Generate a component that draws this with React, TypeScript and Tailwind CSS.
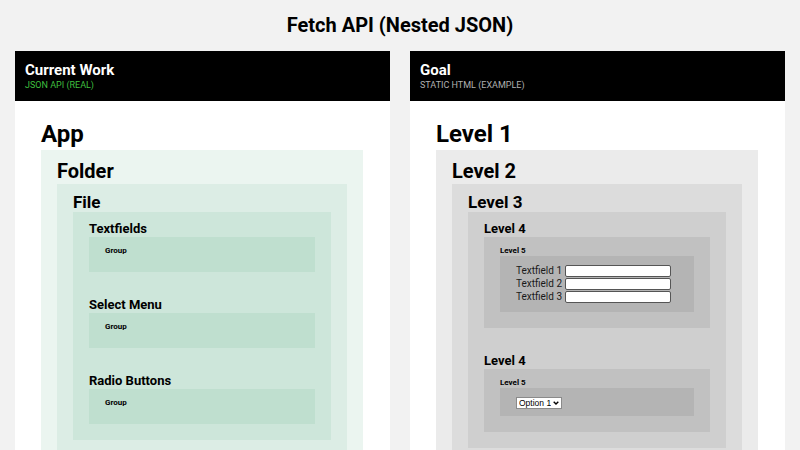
import React from "react";

const font = { fontFamily: "Roboto, 'Noto Sans', Arial, sans-serif" };

function GroupBox({ label, bg, children }: { label: string; bg: string; children?: React.ReactNode }) {
  return (
    <div className={`${bg} px-4 pt-2 pb-4`}>
      <div className="text-[8px] leading-[11px] font-bold text-black">{label}</div>
      {children}
    </div>
  );
}

function H4({ children, first }: { children: React.ReactNode; first?: boolean }) {
  return (
    <div className={`text-[13px] leading-[17px] font-bold text-black ${first ? "" : "mt-6"}`}>{children}</div>
  );
}

function Row({ n }: { n: number }) {
  return (
    <div className="flex items-center h-[13px]">
      <span className="text-[10px] leading-[13px] text-[#1a1a1a] mr-[3px]">Textfield {n}</span>
      <input className="w-[106px] h-[12px] bg-white border border-[#555] rounded-[2px] outline-none" />
    </div>
  );
}

export default function App() {
  return (
    <div className="w-[800px] h-[450px] overflow-hidden bg-[#f2f2f2]" style={font}>
      <div className="h-[51px] flex items-center justify-center pb-[2px]">
        <h1 className="text-[20px] font-bold text-black leading-none">Fetch API (Nested JSON)</h1>
      </div>
      <div className="flex gap-5 px-[15px]">
        {/* Left panel */}
        <div className="flex-1 bg-white h-[400px]">
          <div className="bg-black px-[10px] pt-[10px] pb-[10px]">
            <div className="text-[15px] leading-[18px] font-bold text-white">Current Work</div>
            <div className="text-[9px] leading-[12px] text-[#3fbf3f] uppercase">JSON API (REAL)</div>
          </div>
          <div className="pl-[26px] pr-[27px] pt-[18px]">
            <div className="text-[24px] leading-[31px] font-bold text-black">App</div>
            <div className="bg-[#ebf5f0] px-4 pt-2 pb-4">
              <div className="text-[20px] leading-[26px] font-bold text-black">Folder</div>
              <div className="bg-[#dcede5] px-4 pt-2 pb-4">
                <div className="text-[17px] leading-[20px] font-bold text-black">File</div>
                <div className="bg-[#cde6da] px-4 pt-2 pb-4">
                  <H4 first>Textfields</H4>
                  <GroupBox label="Group" bg="bg-[#bfdfcf]" />
                  <H4>Select Menu</H4>
                  <GroupBox label="Group" bg="bg-[#bfdfcf]" />
                  <H4>Radio Buttons</H4>
                  <GroupBox label="Group" bg="bg-[#bfdfcf]" />
                </div>
              </div>
            </div>
          </div>
        </div>
        {/* Right panel */}
        <div className="flex-1 bg-white h-[400px]">
          <div className="bg-black px-[10px] pt-[10px] pb-[10px]">
            <div className="text-[15px] leading-[18px] font-bold text-white">Goal</div>
            <div className="text-[9px] leading-[12px] text-[#b0b0b0] uppercase">STATIC HTML (EXAMPLE)</div>
          </div>
          <div className="pl-[26px] pr-[27px] pt-[18px]">
            <div className="text-[24px] leading-[31px] font-bold text-black">Level 1</div>
            <div className="bg-[#ebebeb] px-4 pt-2 pb-4">
              <div className="text-[20px] leading-[26px] font-bold text-black">Level 2</div>
              <div className="bg-[#dcdcdc] px-4 pt-2 pb-4">
                <div className="text-[17px] leading-[20px] font-bold text-black">Level 3</div>
                <div className="bg-[#cfcfcf] px-4 pt-2 pb-4">
                  <H4 first>Level 4</H4>
                  <GroupBox label="Level 5" bg="bg-[#c1c1c1]">
                    <div className="bg-[#b4b4b4] px-4 pt-2 pb-[9px]">
                      <Row n={1} />
                      <Row n={2} />
                      <Row n={3} />
                    </div>
                  </GroupBox>
                  <H4>Level 4</H4>
                  <GroupBox label="Level 5" bg="bg-[#c1c1c1]">
                    <div className="bg-[#b4b4b4] px-4 pt-[9px] pb-[7px] flex">
                      <div className="relative w-[46px] h-[12px]">
                        <select
                          className="block appearance-none w-[46px] h-[12px] text-[8.5px] leading-[10px] bg-white border border-[#8a8a8a] text-black pl-[2px] pr-[10px] py-0 outline-none"
                          style={{ fontFamily: "'Liberation Sans', Arial, sans-serif" }}
                          defaultValue="Option 1"
                        >
                          <option>Option 1</option>
                          <option>Option 2</option>
                        </select>
                        <svg
                          className="absolute right-[3px] top-[4px] pointer-events-none"
                          width="6"
                          height="4"
                          viewBox="0 0 6 4"
                        >
                          <path d="M0.7 0.7 L3 3 L5.3 0.7" fill="none" stroke="#000" strokeWidth="1.4" />
                        </svg>
                      </div>
                    </div>
                  </GroupBox>
                </div>
              </div>
            </div>
          </div>
        </div>
      </div>
    </div>
  );
}
